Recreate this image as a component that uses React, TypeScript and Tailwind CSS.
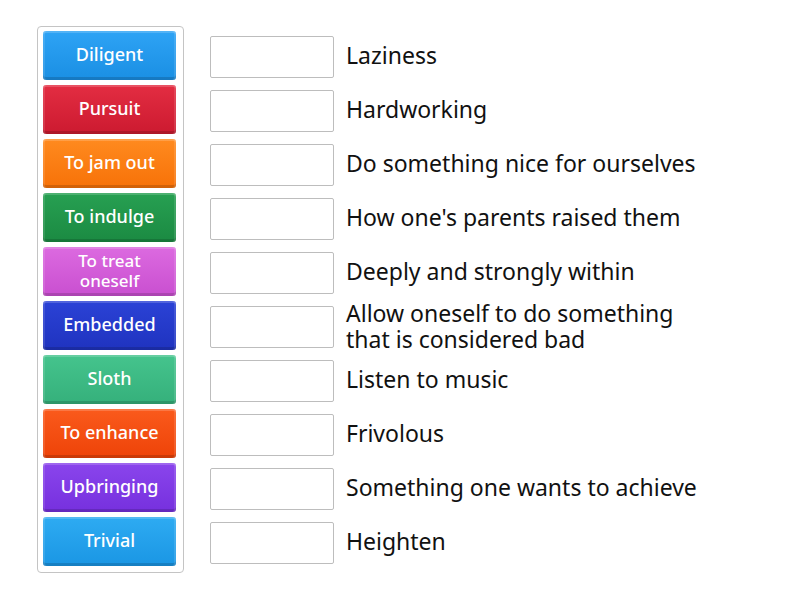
import React from "react";

const items: { label: string; from: string; to: string; two?: boolean }[] = [
  { label: "Diligent", from: "#2ea3f5", to: "#1a8fe3" },
  { label: "Pursuit", from: "#e32d42", to: "#cc1a30" },
  { label: "To jam out", from: "#ff8a1f", to: "#f77208" },
  { label: "To indulge", from: "#27a052", to: "#1b8a42" },
  { label: "To treat oneself", from: "#dc6ae0", to: "#c94fd0", two: true },
  { label: "Embedded", from: "#2b42d6", to: "#1f33bf" },
  { label: "Sloth", from: "#45c48d", to: "#35b07b" },
  { label: "To enhance", from: "#fa5a1c", to: "#ee4308" },
  { label: "Upbringing", from: "#8a45ec", to: "#7630de" },
  { label: "Trivial", from: "#2eabf2", to: "#1a96e4" },
];

const defs: string[] = [
  "Laziness",
  "Hardworking",
  "Do something nice for ourselves",
  "How one's parents raised them",
  "Deeply and strongly within",
  "Allow oneself to do something that is considered bad",
  "Listen to music",
  "Frivolous",
  "Something one wants to achieve",
  "Heighten",
];

export default function App() {
  return (
    <div
      className="w-[800px] h-[600px] bg-white flex items-start pt-[26px] pl-[37px]"
      style={{ fontFamily: "'Noto Sans', 'Open Sans', sans-serif" }}
    >
      <div className="w-[147px] border border-[#c4c4c4] rounded-[4px] pt-[4px] pb-[6px] pl-[5px] flex flex-col gap-[5px]">
        {items.map((it) => (
          <div
            key={it.label}
            className="w-[133px] h-[49px] rounded-[3px] flex items-center justify-center text-white text-center font-medium"
            style={{
              background: `linear-gradient(${it.from}, ${it.to})`,
              boxShadow:
                "inset 0 2px 0 rgba(255,255,255,0.18), inset 2px 0 0 rgba(255,255,255,0.12), inset -2px 0 0 rgba(255,255,255,0.12), inset 0 -3px 0 rgba(0,0,0,0.15)",
            }}
          >
            <span className={it.two ? "text-[17px] leading-[20px] px-[16px] -mt-[2px]" : "text-[18px] leading-[22px] -mt-[3px]"}>
              {it.label}
            </span>
          </div>
        ))}
      </div>
      <div className="ml-[26px] pt-[4px] flex flex-col">
        {defs.map((d, i) => {
          const two = d.length > 35;
          return (
            <div key={i} className="h-[54px] flex items-center">
              <div className="w-[124px] h-[42px] border border-[#bdbdbd] rounded-[2px] bg-white shrink-0" />
              <div
                className={
                  "ml-[12px] text-[23px] text-[#111] " +
                  (two ? "leading-[26px] w-[350px] -mt-[2px]" : "leading-[30px] -mt-[5px]")
                }
              >
                {d}
              </div>
            </div>
          );
        })}
      </div>
    </div>
  );
}
